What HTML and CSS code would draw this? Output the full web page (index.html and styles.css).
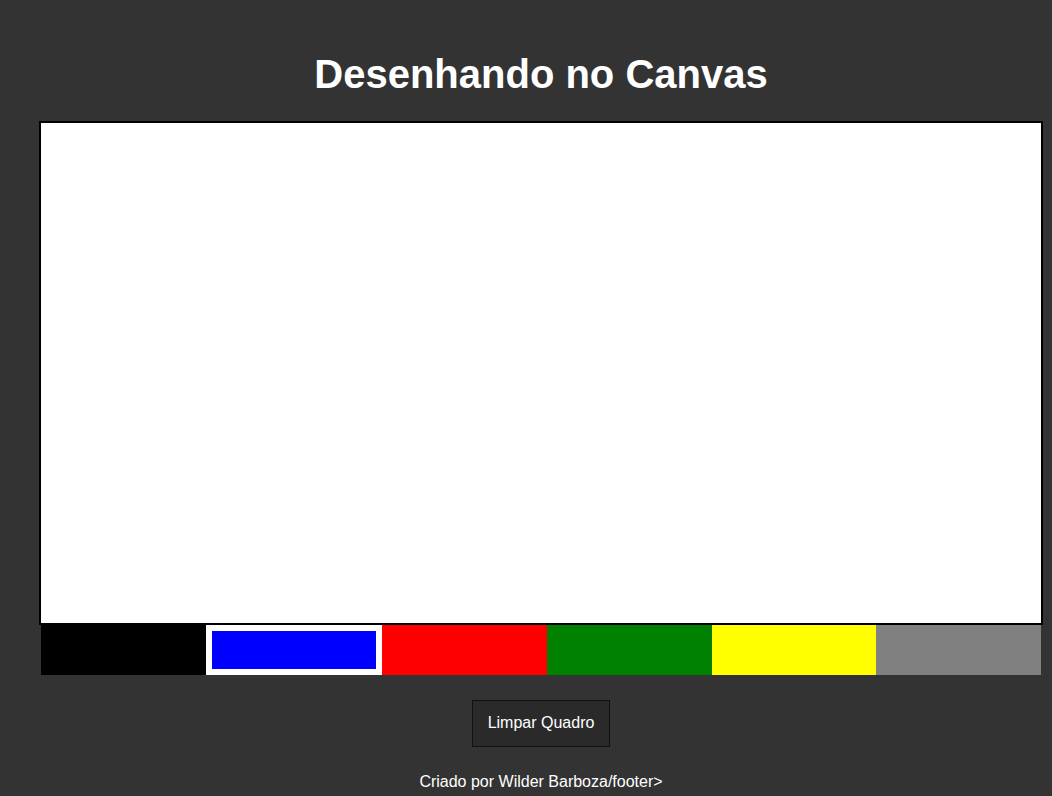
FILE: index.html
```html
<!DOCTYPE html>
<html lang="pt-BR">
<head>
<meta charset="UTF-8">
<title>Desenhando no Canvas</title>
<link rel="stylesheet" href="styles.css">
</head>
<body>
<main class="page">
  <h1 class="title">Desenhando no Canvas</h1>
  <canvas class="board" width="1000" height="500"></canvas>
  <div class="palette">
    <div class="color black"></div>
    <div class="color blue active"></div>
    <div class="color red"></div>
    <div class="color green"></div>
    <div class="color yellow"></div>
    <div class="color gray"></div>
  </div>
  <button class="clear-btn">Limpar Quadro</button>
  <footer class="footer">Criado por Wilder Barboza/footer&gt;</footer>
</main>
</body>
</html>
```
FILE: styles.css
```css
html, body {
  margin: 0;
  padding: 0;
  background: #333333;
  font-family: "Liberation Sans", Arial, sans-serif;
  color: #ffffff;
}

.page {
  width: 1004px;
  margin-left: 39px;
  padding-top: 51px;
  display: flex;
  flex-direction: column;
  align-items: center;
}

.title {
  margin: 0;
  font-size: 40px;
  line-height: 46px;
  font-weight: bold;
  color: #ffffff;
}

.board {
  display: block;
  margin-top: 24px;
  width: 1000px;
  height: 500px;
  background: #ffffff;
  border: 2px solid #000000;
}

.palette {
  display: flex;
  width: 1000px;
  height: 50px;
}

.color {
  flex: 1 1 0;
  height: 50px;
  box-sizing: border-box;
}

.color.active {
  border: 6px solid #ffffff;
}

.black { background: #000000; }
.blue { background: #0000ff; }
.red { background: #ff0000; }
.green { background: #008000; }
.yellow { background: #ffff00; }
.gray { background: #808080; }

.clear-btn {
  margin-top: 25px;
  width: 138px;
  height: 47px;
  padding: 0 0 2px 0;
  background: #2a2a2a;
  border: 1px solid #111111;
  color: #ffffff;
  font-family: "Liberation Sans", Arial, sans-serif;
  font-size: 16px;
}

.footer {
  margin-top: 25px;
  font-size: 16px;
  line-height: 19px;
  color: #ffffff;
}
```
